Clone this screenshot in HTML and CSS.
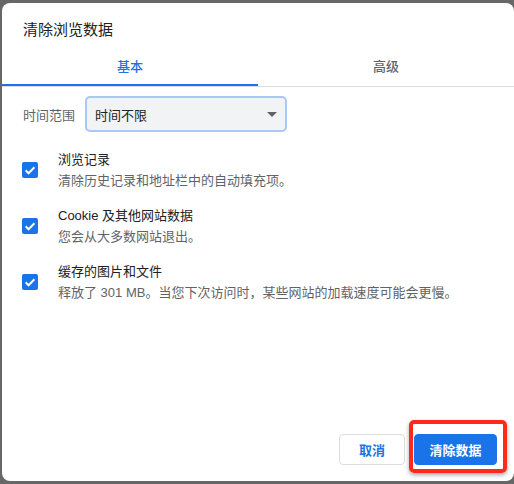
FILE: index.html
```html
<!DOCTYPE html>
<html lang="zh-CN">
<head>
<meta charset="utf-8">
<title>清除浏览数据</title>
<link rel="stylesheet" href="styles.css">
</head>
<body>
<div class="dialog">
  <div class="title">清除浏览数据</div>
  <div class="tabs">
    <div class="tab active">基本</div>
    <div class="tab">高级</div>
  </div>
  <div class="range">
    <span class="range-label">时间范围</span>
    <div class="select">
      <span>时间不限</span>
      <svg class="arrow" width="10" height="5" viewBox="0 0 10 5"><path d="M0 0h10L5 5z" fill="#5f6368"/></svg>
    </div>
  </div>
  <div class="items">
    <div class="item">
      <svg class="cb" width="16" height="16" viewBox="0 0 16 16"><rect width="16" height="16" rx="2" fill="#1a73e8"/><path d="M3.6 8.2l3 3 5.8-6" fill="none" stroke="#fff" stroke-width="2"/></svg>
      <div class="item-text">
        <div class="item-title">浏览记录</div>
        <div class="item-desc">清除历史记录和地址栏中的自动填充项。</div>
      </div>
    </div>
    <div class="item">
      <svg class="cb" width="16" height="16" viewBox="0 0 16 16"><rect width="16" height="16" rx="2" fill="#1a73e8"/><path d="M3.6 8.2l3 3 5.8-6" fill="none" stroke="#fff" stroke-width="2"/></svg>
      <div class="item-text">
        <div class="item-title">Cookie 及其他网站数据</div>
        <div class="item-desc">您会从大多数网站退出。</div>
      </div>
    </div>
    <div class="item">
      <svg class="cb" width="16" height="16" viewBox="0 0 16 16"><rect width="16" height="16" rx="2" fill="#1a73e8"/><path d="M3.6 8.2l3 3 5.8-6" fill="none" stroke="#fff" stroke-width="2"/></svg>
      <div class="item-text">
        <div class="item-title">缓存的图片和文件</div>
        <div class="item-desc">释放了 301 MB。当您下次访问时，某些网站的加载速度可能会更慢。</div>
      </div>
    </div>
  </div>
  <div class="footer">
    <button class="btn cancel">取消</button>
    <button class="btn primary">清除数据</button>
    <div class="highlight"></div>
  </div>
</div>
</body>
</html>
```
FILE: styles.css
```css
html, body {
  margin: 0;
  padding: 0;
}
body {
  background: #676767;
  width: 514px;
  height: 484px;
  overflow: hidden;
  font-family: "Liberation Sans", "Noto Sans CJK SC", sans-serif;
  color: #202124;
}
.dialog {
  margin: 3px 0 0 2px;
  width: 512px;
  height: 478px;
  background: #fff;
  border-radius: 8px;
  display: flex;
  flex-direction: column;
  box-sizing: border-box;
}
.title {
  font-size: 15px;
  line-height: 20px;
  padding: 17px 0 4px 21px;
  color: #202124;
}
.tabs {
  display: flex;
  border-bottom: 1px solid #dadce0;
}
.tab {
  flex: 1;
  height: 42px;
  box-sizing: border-box;
  padding-top: 1px;
  display: flex;
  align-items: center;
  justify-content: center;
  font-size: 13px;
  font-weight: 500;
  color: #5f6368;
}
.tab.active {
  color: #1a73e8;
  box-shadow: inset 0 -2px 0 #1a73e8;
}
.range {
  display: flex;
  align-items: center;
  gap: 10px;
  padding: 9px 0 0 21px;
}
.range-label {
  flex: none;
  white-space: nowrap;
  font-size: 13px;
  color: #5f6368;
}
.select {
  width: 202px;
  height: 36px;
  box-sizing: border-box;
  border: 2px solid #a9c8f5;
  border-radius: 5px;
  background: #f1f3f4;
  display: flex;
  align-items: center;
  justify-content: space-between;
  padding: 0 8px 0 8px;
  font-size: 13px;
  color: #202124;
}
.arrow {
  margin-top: 1px;
}
.items {
  display: flex;
  flex-direction: column;
  gap: 14px;
  padding: 17px 0 0 20px;
}
.item {
  display: flex;
  align-items: center;
  gap: 20px;
}
.cb {
  flex: none;
}
.item-text {
  font-size: 13px;
  line-height: 21px;
}
.item-title {
  color: #202124;
}
.item-desc {
  color: #5f6368;
}
.footer {
  margin-top: auto;
  position: relative;
  display: flex;
  justify-content: flex-end;
  gap: 9px;
  padding: 0 17px 16px 0;
}
.btn {
  height: 31px;
  border-radius: 4px;
  font-family: inherit;
  font-size: 13px;
  font-weight: 700;
  padding: 0;
  box-sizing: border-box;
  cursor: pointer;
}
.cancel {
  width: 66px;
  background: #fff;
  color: #1a73e8;
  border: 1px solid #dadce0;
}
.primary {
  width: 83px;
  background: #1a73e8;
  color: #fff;
  border: 1px solid #1a73e8;
}
.highlight {
  position: absolute;
  right: 7px;
  bottom: 8px;
  width: 98px;
  height: 53px;
  box-sizing: border-box;
  border: 4px solid #ff2a1c;
  border-radius: 5px;
  box-shadow: 0 2px 4px rgba(0, 0, 0, 0.35);
  pointer-events: none;
}
```
